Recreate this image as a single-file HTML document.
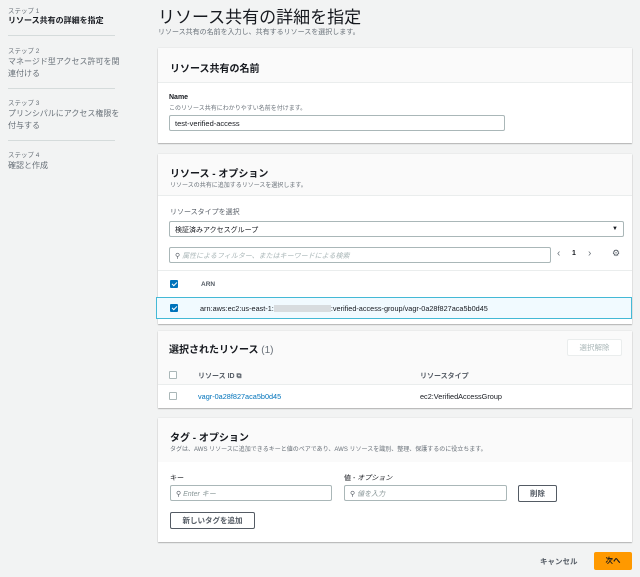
<!DOCTYPE html>
<html><head><meta charset="utf-8"><style>
*{box-sizing:border-box;margin:0;padding:0}
body{width:640px;height:577px;background:#f2f3f3;font-family:"Liberation Sans","Noto Sans CJK JP",sans-serif;color:#16191f;position:relative;overflow:hidden;font-size:8px}
.a{position:absolute;white-space:nowrap}
.pan{position:absolute;left:158px;width:474px;background:#fff;box-shadow:0 1px 1px rgba(0,0,0,.25),0 0 1px rgba(0,0,0,.15)}
.hd{background:#fafafa;border-bottom:1px solid #eaeded}
.inp{position:absolute;border:1px solid #aab7b8;border-radius:2px;background:#fff;height:16px}
.cb{position:absolute;width:8px;height:8px;border:1px solid #aab7b8;border-radius:1px;background:#fff}
.cbc{background:#0073bb;border-color:#0073bb}
.cbc:after{content:"";position:absolute;left:2px;top:0px;width:2px;height:4px;border:solid #fff;border-width:0 1.3px 1.3px 0;transform:rotate(45deg)}
.btn{position:absolute;border:1px solid #545b64;border-radius:2px;font-weight:bold;font-size:7.5px;text-align:center;color:#545b64;background:#fff}
.sep{position:absolute;left:8px;width:107px;height:1px;background:#d5dbdb}
.g{color:#687078}
</style></head><body>
<div class="a g" style="left:8px;top:5px;font-size:6.5px">ステップ 1</div>
<div class="a" style="left:8px;top:15px;font-size:8px;font-weight:bold">リソース共有の詳細を指定</div>
<div class="sep" style="top:35px"></div>
<div class="a g" style="left:8px;top:45px;font-size:6.5px">ステップ 2</div>
<div class="a g" style="left:8px;top:56px;font-size:8px;line-height:12px">マネージド型アクセス許可を関<br>連付ける</div>
<div class="sep" style="top:88px"></div>
<div class="a g" style="left:8px;top:97px;font-size:6.5px">ステップ 3</div>
<div class="a g" style="left:8px;top:108px;font-size:8px;line-height:12px">プリンシパルにアクセス権限を<br>付与する</div>
<div class="sep" style="top:140px"></div>
<div class="a g" style="left:8px;top:149px;font-size:6.5px">ステップ 4</div>
<div class="a g" style="left:8px;top:160px;font-size:8px">確認と作成</div>

<div class="a" style="left:158px;top:3px;font-size:17px">リソース共有の詳細を指定</div>
<div class="a g" style="left:158px;top:27px;font-size:7px">リソース共有の名前を入力し、共有するリソースを選択します。</div>

<div class="pan" style="top:48px;height:95px">
 <div class="hd" style="height:35px"></div>
 <div class="a" style="left:12px;top:12px;font-size:10px;font-weight:bold">リソース共有の名前</div>
 <div class="a" style="left:11px;top:46px;font-size:7px;font-weight:bold">Name</div>
 <div class="a g" style="left:11px;top:55px;font-size:6px">このリソース共有にわかりやすい名前を付けます。</div>
 <div class="inp" style="left:11px;top:67px;width:336px;padding:3px 5px;font-size:7.5px">test-verified-access</div>
</div>

<div class="pan" style="top:154px;height:170px">
 <div class="hd" style="height:42px"></div>
 <div class="a" style="left:12px;top:11px;font-size:10px;font-weight:bold">リソース - オプション</div>
 <div class="a g" style="left:12px;top:26px;font-size:6px">リソースの共有に追加するリソースを選択します。</div>
 <div class="a" style="left:12px;top:53px;font-size:7px;color:#545b64">リソースタイプを選択</div>
 <div class="inp" style="left:11px;top:67px;width:455px;padding:3px 5px;font-size:7px">検証済みアクセスグループ<span style="position:absolute;right:5px;top:4px;font-size:6px">▼</span></div>
 <div class="inp" style="left:11px;top:93px;width:382px;padding:3px 5px;font-size:7px;color:#aab7b8;font-style:italic"><span style="color:#545b64;font-style:normal">&#9906;</span> 属性によるフィルター、またはキーワードによる検索</div>
 <div class="a g" style="left:399px;top:94px;font-size:10px">‹</div>
 <div class="a" style="left:414px;top:96px;font-size:7px;font-weight:bold">1</div>
 <div class="a g" style="left:430px;top:94px;font-size:10px">›</div>
 <div class="a" style="left:454px;top:94px;font-size:9px;color:#545b64">⚙</div>
 <div style="position:absolute;left:0;top:116px;width:474px;height:1px;background:#eaeded"></div>
 <div class="cb cbc" style="left:12px;top:126px"></div>
 <div class="a" style="left:43px;top:127px;font-size:6.5px;font-weight:bold;color:#545b64">ARN</div>
 <div style="position:absolute;left:-2px;top:143px;width:476px;height:22px;background:#f1faff;border:1px solid #44b9d6"></div>
 <div class="cb cbc" style="left:12px;top:150px"></div>
 <div class="a" style="left:42px;top:150px;font-size:7.3px">arn:aws:ec2:us-east-1:<span style="display:inline-block;width:57px;height:7px;background:#d8dcdf;vertical-align:-1px"></span>:verified-access-group/vagr-0a28f827aca5b0d45</div>
</div>

<div class="pan" style="top:331px;height:77px">
 <div class="hd" style="height:32px;border:none"></div>
 <div class="a" style="left:11px;top:10px;font-size:10px;font-weight:bold">選択されたリソース <span style="font-weight:normal;color:#687078">(1)</span></div>
 <div class="btn" style="left:409px;top:8px;width:55px;height:17px;line-height:15px;border-color:#eaeded;color:#aab7b8;font-weight:normal">選択解除</div>
 <div style="position:absolute;left:0;top:32px;width:474px;height:22px;background:#fafafa;border-bottom:1px solid #eaeded"></div>
 <div class="cb" style="left:11px;top:40px"></div>
 <div class="a" style="left:40px;top:40px;font-size:7px;color:#545b64;font-weight:bold">リソース ID ⧉</div>
 <div class="a" style="left:262px;top:40px;font-size:7px;color:#545b64;font-weight:bold">リソースタイプ</div>
 <div class="cb" style="left:11px;top:61px"></div>
 <div class="a" style="left:40px;top:61px;font-size:7.3px;color:#0073bb">vagr-0a28f827aca5b0d45</div>
 <div class="a" style="left:262px;top:61px;font-size:7.3px">ec2:VerifiedAccessGroup</div>
</div>

<div class="pan" style="top:418px;height:124px">
 <div class="hd" style="height:44px;border:none"></div>
 <div class="a" style="left:12px;top:11px;font-size:10px;font-weight:bold">タグ - オプション</div>
 <div class="a g" style="left:12px;top:26px;font-size:6px">タグは、AWS リソースに追加できるキーと値のペアであり、AWS リソースを識別、整理、保護するのに役立ちます。</div>
 <div class="a" style="left:12px;top:55px;font-size:7px">キー</div>
 <div class="inp" style="left:12px;top:67px;width:162px;padding:3px 5px;font-size:7px;color:#879596;font-style:italic"><span style="font-style:normal;color:#545b64">&#9906;</span> Enter キー</div>
 <div class="a" style="left:186px;top:55px;font-size:7px">値 - <i>オプション</i></div>
 <div class="inp" style="left:186px;top:67px;width:163px;padding:3px 5px;font-size:7px;color:#879596;font-style:italic"><span style="font-style:normal;color:#545b64">&#9906;</span> 値を入力</div>
 <div class="btn" style="left:360px;top:67px;width:39px;height:17px;line-height:15px">削除</div>
 <div class="btn" style="left:12px;top:94px;width:85px;height:17px;line-height:15px">新しいタグを追加</div>
</div>

<div class="a" style="left:540px;top:556px;font-size:7.5px;font-weight:bold;color:#545b64">キャンセル</div>
<div class="a" style="left:594px;top:552px;width:38px;height:18px;background:#ff9900;font-size:7.5px;font-weight:bold;text-align:center;line-height:18px;border-radius:2px">次へ</div>
</body></html>
